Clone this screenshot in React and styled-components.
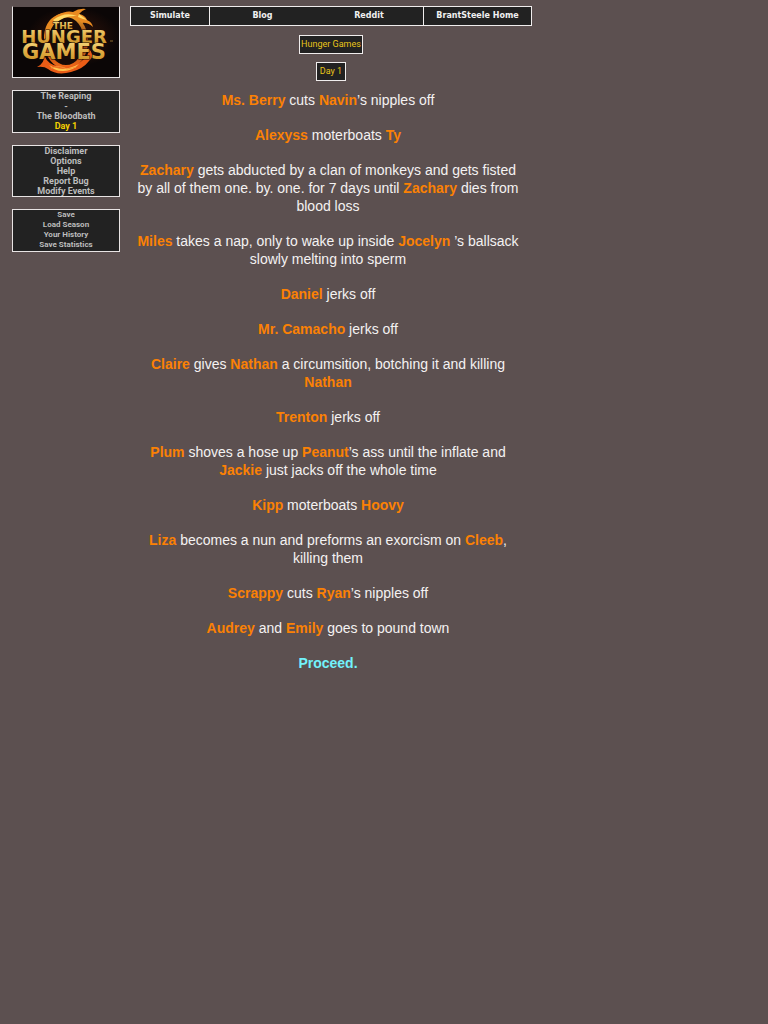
import React from "react";
import styled, { createGlobalStyle } from "styled-components";

const GlobalStyle = createGlobalStyle`
  * { box-sizing: border-box; }
  body {
    margin: 0;
    background: #5c5050;
    color: #f4f2f2;
    font-family: "Liberation Sans", Arial, sans-serif;
  }
`;

const Page = styled.div`
  display: flex;
  align-items: flex-start;
  gap: 10px;
  padding: 6px 12px;
`;

const Sidebar = styled.aside`
  display: flex;
  flex-direction: column;
  gap: 12px;
  width: 108px;
  flex-shrink: 0;
`;

const LogoLink = styled.a`
  display: block;
  border: 1px solid #e8e4e4;
  border-top-color: #5c5050;
  background: #0b0606;
  svg { display: block; width: 100%; height: auto; }
`;

const Menu = styled.nav`
  display: flex;
  flex-direction: column;
  align-items: center;
  border: 1px solid #e8e4e4;
  background: #222;
  font-family: Roboto, sans-serif;
  font-weight: bold;
  font-size: ${(p) => (p.$small ? 8 : 9)}px;
  line-height: 10px;
  color: #bcbcbc;
  padding-bottom: ${(p) => (p.$short ? 0 : 1)}px;
`;

const MenuLink = styled.a`
  color: ${(p) => (p.$active ? "#f5d000" : "#bcbcbc")};
  text-decoration: none;
`;

const Main = styled.main`
  flex: 0 1 402px;
  min-width: 0;
  display: flex;
  flex-direction: column;
  align-items: center;
`;

const TopBar = styled.nav`
  align-self: stretch;
  display: grid;
  grid-template-columns: 78fr 106fr 108fr 108fr;
  border: 1px solid #f0eded;
  background: #222;
`;

const TopLink = styled.a`
  padding-bottom: 1px;
  border-left: ${(p) => (p.$divided ? "1px solid #f0eded" : "none")};
  color: #f0f0f0;
  font: bold 8px/17px "DejaVu Sans", Verdana, sans-serif;
  text-align: center;
  text-decoration: none;
`;

const Tag = styled.h1`
  margin: ${(p) => (p.$first ? 9 : 8)}px 0 0;
  padding: 0 ${(p) => (p.$first ? 1 : 3)}px;
  border: 1px solid #f0eded;
  background: #222;
  color: #e8c51a;
  font: normal 9px/17px Roboto, sans-serif;
`;

const Events = styled.div`
  display: flex;
  flex-direction: column;
  gap: 17px;
  margin-top: 10px;
  padding: 0 8px 0 2px;
  font-size: 14px;
  line-height: 18px;
  text-align: center;
`;

const Event = styled.p`
  margin: 0;
`;

const Name = styled.b`
  color: #fb8104;
`;

const Proceed = styled.a`
  color: #72f2fb;
  font-weight: bold;
  text-decoration: none;
`;

const menus = [
  ["The Reaping", "-", "The Bloodbath", "Day 1"],
  ["Disclaimer", "Options", "Help", "Report Bug", "Modify Events"],
  ["Save", "Load Season", "Your History", "Save Statistics"],
];

const topLinks = ["Simulate", "Blog", "Reddit", "BrantSteele Home"];

// Odd entries are tribute names.
const events = [
  ["", "Ms. Berry", " cuts ", "Navin", "’s nipples off"],
  ["", "Alexyss", " moterboats ", "Ty"],
  ["", "Zachary", " gets abducted by a clan of monkeys and gets fisted by all of them one. by. one. for 7 days until ", "Zachary", " dies from blood loss"],
  ["", "Miles", " takes a nap, only to wake up inside ", "Jocelyn", " ’s ballsack slowly melting into sperm"],
  ["", "Daniel", " jerks off"],
  ["", "Mr. Camacho", " jerks off"],
  ["", "Claire", " gives ", "Nathan", " a circumsition, botching it and killing ", "Nathan"],
  ["", "Trenton", " jerks off"],
  ["", "Plum", " shoves a hose up ", "Peanut", "’s ass until the inflate and ", "Jackie", " just jacks off the whole time"],
  ["", "Kipp", " moterboats ", "Hoovy"],
  ["", "Liza", " becomes a nun and preforms an exorcism on ", "Cleeb", ", killing them"],
  ["", "Scrappy", " cuts ", "Ryan", "’s nipples off"],
  ["", "Audrey", " and ", "Emily", " goes to pound town"],
];

function Logo() {
  return (
    <svg viewBox="0 0 106 70" role="img" aria-label="The Hunger Games">
      <defs>
        <linearGradient id="gold" x1="0" y1="0" x2="0" y2="1">
          <stop offset="0" stopColor="#f7dc84" />
          <stop offset="0.5" stopColor="#e0ac42" />
          <stop offset="1" stopColor="#c48a1e" />
        </linearGradient>
        <linearGradient id="fire" x1="0" y1="0" x2="0" y2="1">
          <stop offset="0" stopColor="#f5a92c" />
          <stop offset="0.45" stopColor="#8a350f" />
          <stop offset="1" stopColor="#f06a18" />
        </linearGradient>
        <radialGradient id="smoke">
          <stop offset="0" stopColor="#3a170b" />
          <stop offset="1" stopColor="#0b0606" />
        </radialGradient>
      </defs>
      <rect width="106" height="70" fill="#0b0606" />
      <ellipse cx="60" cy="30" rx="46" ry="30" fill="url(#smoke)" />
      <ellipse cx="53" cy="34" rx="20" ry="26" fill="#180b07" stroke="url(#fire)" strokeWidth="4" />
      <path d="M31 32Q31 14 44 8Q54 3 60 5Q66 1 73 2Q68 4 66 7Q72 8 74 13Q79 15 80 20Q74 15 69 16Q61 8 50 11Q39 15 35 30Z" fill="#e98a20" />
      <path d="M40 13Q52 4 64 9Q52 8 43 16ZM66 7Q70 10 74 13Q69 12 65 10Z" fill="#ffd965" />
      <path d="M31 48Q36 60 48 59Q62 61 71 52Q77 47 75 41Q83 48 76 54Q70 62 58 65Q44 69 35 62Q31 59 24 60Q32 56 31 48Z" fill="#ea5c16" />
      <path d="M36 58Q50 66 66 57Q60 64 50 64Q41 64 36 58Z" fill="#ffc64e" />
      <path d="M38 61Q47 58 54 62Q60 61 63 60" fill="none" stroke="#f8973a" strokeWidth="1" />
      <path d="M97 34H100" stroke="#8a6a2c" strokeWidth="1" />
      <g
        fill="url(#gold)"
        stroke="#1a0c05"
        strokeWidth="1"
        paintOrder="stroke"
        fontFamily="DejaVu Sans, Verdana, sans-serif"
        fontWeight="bold"
        textAnchor="middle"
      >
        <text x="50" y="22" fontSize="9">THE</text>
        <text x="51" y="36" fontSize="18">HUNGER</text>
        <text x="51" y="52" fontSize="21">GAMES</text>
      </g>
    </svg>
  );
}

export default function App() {
  return (
    <>
      <GlobalStyle />
      <Page>
        <Sidebar>
          <LogoLink href="#home"><Logo /></LogoLink>
          {menus.map((items, i) => (
            <Menu key={items[0]} $short={i === 1} $small={i === 2}>
              {items.map((t) =>
                t === "-" ? <span key={t}>-</span> : (
                  <MenuLink key={t} href="#menu" $active={t === "Day 1"}>{t}</MenuLink>
                )
              )}
            </Menu>
          ))}
        </Sidebar>
        <Main>
          <TopBar>
            {topLinks.map((t, i) => (
              <TopLink key={t} href="#top" $divided={i === 1 || i === 3}>{t}</TopLink>
            ))}
          </TopBar>
          <Tag $first>Hunger Games</Tag>
          <Tag as="h2">Day 1</Tag>
          <Events>
            {events.map((parts, i) => (
              <Event key={i}>
                {parts.map((t, j) => (j % 2 ? <Name key={j}>{t}</Name> : t))}
              </Event>
            ))}
            <Event><Proceed href="#proceed">Proceed.</Proceed></Event>
          </Events>
        </Main>
      </Page>
    </>
  );
}
